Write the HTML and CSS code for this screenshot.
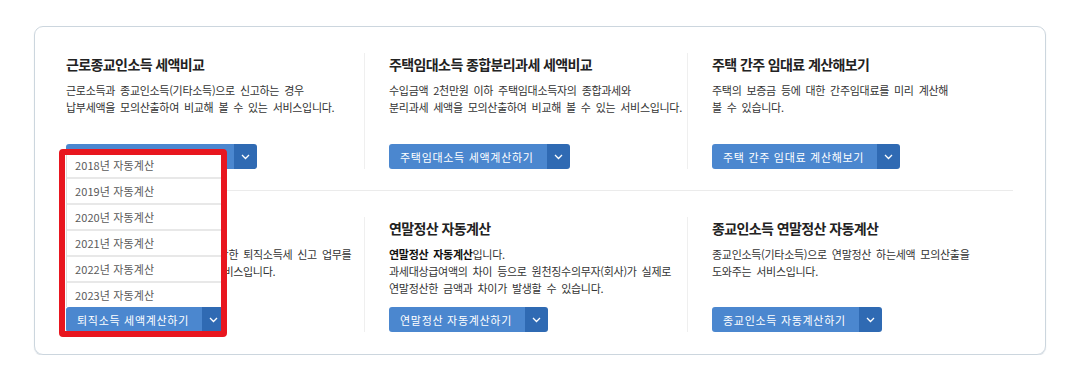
FILE: index.html
```html
<!DOCTYPE html>
<html lang="ko">
<head>
<meta charset="utf-8">
<title>세액계산 서비스</title>
<link rel="stylesheet" href="styles.css">
</head>
<body>
<div class="card">
  <div class="row row-top">
    <div class="cell">
      <h3 class="title">근로종교인소득 세액비교</h3>
      <p class="desc">근로소득과 종교인소득(기타소득)으로 신고하는 경우<br>납부세액을 모의산출하여 비교해 볼 수 있는 서비스입니다.</p>
      <div class="btn-group">
        <span class="btn-main">근로종교인소득 세액계산하기</span>
        <span class="btn-arrow"><svg width="9" height="6" viewBox="0 0 9 6"><polyline points="1,1 4.5,4.5 8,1" fill="none" stroke="#fff" stroke-width="1.3"/></svg></span>
      </div>
    </div>
    <div class="cell">
      <h3 class="title">주택임대소득 종합분리과세 세액비교</h3>
      <p class="desc">수입금액 2천만원 이하 주택임대소득자의 종합과세와<br>분리과세 세액을 모의산출하여 비교해 볼 수 있는 서비스입니다.</p>
      <div class="btn-group">
        <span class="btn-main">주택임대소득 세액계산하기</span>
        <span class="btn-arrow"><svg width="9" height="6" viewBox="0 0 9 6"><polyline points="1,1 4.5,4.5 8,1" fill="none" stroke="#fff" stroke-width="1.3"/></svg></span>
      </div>
    </div>
    <div class="cell">
      <h3 class="title">주택 간주 임대료 계산해보기</h3>
      <p class="desc">주택의 보증금 등에 대한 간주임대료를 미리 계산해<br>볼 수 있습니다.</p>
      <div class="btn-group">
        <span class="btn-main">주택 간주 임대료 계산해보기</span>
        <span class="btn-arrow"><svg width="9" height="6" viewBox="0 0 9 6"><polyline points="1,1 4.5,4.5 8,1" fill="none" stroke="#fff" stroke-width="1.3"/></svg></span>
      </div>
    </div>
  </div>
  <div class="divider"></div>
  <div class="row row-bottom">
    <div class="cell">
      <h3 class="title">퇴직소득 세액계산</h3>
      <p class="desc">퇴직소득 지급 시 계산이 매우 복잡한 퇴직소득세 신고 업무를<br>쉽고 간편하게 처리하도록 돕는 서비스입니다.</p>
      <div class="btn-group open">
        <ul class="menu">
          <li>2018년 자동계산</li>
          <li>2019년 자동계산</li>
          <li>2020년 자동계산</li>
          <li>2021년 자동계산</li>
          <li>2022년 자동계산</li>
          <li>2023년 자동계산</li>
        </ul>
        <span class="btn-main">퇴직소득 세액계산하기</span>
        <span class="btn-arrow"><svg width="9" height="6" viewBox="0 0 9 6"><polyline points="1,1 4.5,4.5 8,1" fill="none" stroke="#fff" stroke-width="1.3"/></svg></span>
        <span class="highlight"></span>
      </div>
    </div>
    <div class="cell">
      <h3 class="title">연말정산 자동계산</h3>
      <p class="desc"><b>연말정산 자동계산</b>입니다.<br>과세대상급여액의 차이 등으로 원천징수의무자(회사)가 실제로<br>연말정산한 금액과 차이가 발생할 수 있습니다.</p>
      <div class="btn-group">
        <span class="btn-main">연말정산 자동계산하기</span>
        <span class="btn-arrow"><svg width="9" height="6" viewBox="0 0 9 6"><polyline points="1,1 4.5,4.5 8,1" fill="none" stroke="#fff" stroke-width="1.3"/></svg></span>
      </div>
    </div>
    <div class="cell">
      <h3 class="title">종교인소득 연말정산 자동계산</h3>
      <p class="desc">종교인소득(기타소득)으로 연말정산 하는세액 모의산출을<br>도와주는 서비스입니다.</p>
      <div class="btn-group">
        <span class="btn-main">종교인소득 자동계산하기</span>
        <span class="btn-arrow"><svg width="9" height="6" viewBox="0 0 9 6"><polyline points="1,1 4.5,4.5 8,1" fill="none" stroke="#fff" stroke-width="1.3"/></svg></span>
      </div>
    </div>
  </div>
</div>
</body>
</html>
```
FILE: styles.css
```css
* { box-sizing: border-box; }
body {
  margin: 0;
  background: #fff;
  font-family: "Noto Sans CJK KR", "Noto Sans", sans-serif;
  color: #333;
}
.card {
  margin: 26px 0 0 34px;
  width: 1012px;
  height: 329px;
  border: 1px solid #ccd6de;
  border-radius: 9px;
  box-shadow: 0 1px 1px rgba(120, 140, 160, 0.3);
  padding: 26px 0 0 6px;
}
.row {
  display: grid;
  grid-template-columns: repeat(3, 323px);
}
.row-top { height: 116px; }
.row-bottom { height: 115px; }
.divider {
  margin: 21px 0 26px 25px;
  width: 947px;
  height: 1px;
  background: #ebebeb;
}
.cell {
  display: flex;
  flex-direction: column;
  align-items: flex-start;
  padding-left: 25px;
}
.cell + .cell {
  border-left: 1px solid #efefef;
  padding-left: 24px;
}
.title {
  margin: 0;
  padding-top: 1px;
  font-size: 14px;
  line-height: 20px;
  font-weight: 700;
  letter-spacing: -0.6px;
  color: #222;
  white-space: nowrap;
}
.desc {
  margin: 8px 0 0;
  font-size: 11px;
  line-height: 17px;
  letter-spacing: -0.3px;
  word-spacing: 2.2px;
  color: #333;
  white-space: nowrap;
}
.desc b { font-weight: 700; color: #111; }
.btn-group {
  margin-top: auto;
  display: flex;
  height: 25px;
  position: relative;
}
.btn-main {
  display: flex;
  align-items: center;
  padding: 0 13px 0 11px;
  background: #4b87cf;
  color: #fff;
  font-size: 11px;
  letter-spacing: 0.7px;
  border-radius: 3px 0 0 3px;
  white-space: nowrap;
}
.btn-arrow {
  width: 23px;
  display: flex;
  align-items: center;
  justify-content: center;
  background: #2f6ab3;
  border-radius: 0 3px 3px 0;
}
.menu {
  position: absolute;
  left: 0;
  right: 0;
  bottom: 100%;
  margin: 0;
  padding: 0;
  list-style: none;
  background: #fff;
  border: 1px solid #dcdcdc;
  border-bottom: 0;
}
.menu li {
  height: 26px;
  line-height: 24px;
  padding-left: 8px;
  font-size: 11px;
  letter-spacing: 0.1px;
  color: #5a5a5a;
  border-bottom: 2px solid #e8e8e8;
}
.menu li:last-child { border-bottom: 0; height: 24px; }
.highlight {
  position: absolute;
  left: -7px;
  right: -2px;
  top: -158px;
  bottom: -5px;
  border: 6px solid #e8161f;
  border-radius: 4px;
  pointer-events: none;
}
```
